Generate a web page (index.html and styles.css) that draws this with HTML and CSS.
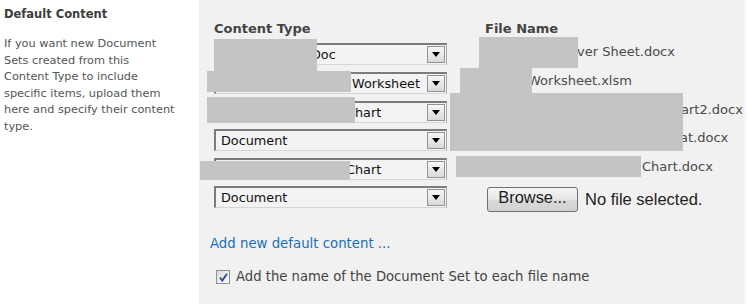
FILE: index.html
```html
<!DOCTYPE html>
<html>
<head>
<meta charset="utf-8">
<link rel="stylesheet" href="styles.css">
</head>
<body>
<div class="page">
  <div class="side">
    <h3 class="side-title">Default Content</h3>
    <p class="side-desc">If you want new Document<br>Sets created from this<br>Content Type to include<br>specific items, upload them<br>here and specify their content<br>type.</p>
  </div>
  <div class="main">
    <div class="table">
      <div class="th">Content Type</div>
      <div class="th">File Name</div>

      <div class="sel"><span class="sel-text ind-doc">Doc</span><span class="sel-btn"></span></div>
      <div class="fn fn-1">ver Sheet.docx</div>

      <div class="sel"><span class="sel-text ind-ws">Worksheet</span><span class="sel-btn"></span></div>
      <div class="fn fn-2">Worksheet.xlsm</div>

      <div class="sel"><span class="sel-text ind-chart">Chart</span><span class="sel-btn"></span></div>
      <div class="fn fn-3">art2.docx</div>

      <div class="sel"><span class="sel-text">Document</span><span class="sel-btn"></span></div>
      <div class="fn fn-4">at.docx</div>

      <div class="sel"><span class="sel-text ind-chart">Chart</span><span class="sel-btn"></span></div>
      <div class="fn fn-5">Chart.docx</div>

      <div class="sel"><span class="sel-text">Document</span><span class="sel-btn"></span></div>
      <div class="upload"><span class="browse">Browse...</span><span class="nofile">No file selected.</span></div>
    </div>
    <a class="add-link">Add new default content ...</a>
    <div class="chk-row">
      <span class="chk"><svg width="11" height="11" viewBox="0 0 11 11"><path d="M2 5.5 L4.3 8.5 L9 1.8" fill="none" stroke="#2f4f9a" stroke-width="2"/></svg></span>
      <span class="chk-label">Add the name of the Document Set to each file name</span>
    </div>

    <span class="redact r1"></span>
    <span class="redact r2"></span>
    <span class="redact r3"></span>
    <span class="redact r4"></span>
    <span class="redact ra"></span>
    <span class="redact rb"></span>
    <span class="redact rc"></span>
    <span class="redact rd"></span>
  </div>
  <div class="edge"></div>
</div>
</body>
</html>
```

FILE: styles.css
```css
html, body {
  margin: 0;
  padding: 0;
  background: #ffffff;
}
body {
  font-family: "DejaVu Sans", Verdana, sans-serif;
}
.page {
  display: flex;
  width: 750px;
  height: 304px;
  background: #ffffff;
}
.side {
  width: 199px;
  flex: none;
  box-sizing: border-box;
  padding: 6px 0 0 4px;
}
.side-title {
  margin: 0;
  font-size: 11.5px;
  line-height: 16px;
  font-weight: bold;
  color: #3c3c3c;
}
.side-desc {
  margin: 14px 0 0;
  font-size: 11.3px;
  line-height: 16.6px;
  color: #555555;
}
.main {
  width: 545px;
  flex: none;
  position: relative;
  box-sizing: border-box;
  background: #f1f1f1;
  padding: 22.2px 0 0 11px;
}
.edge {
  width: 3px;
  flex: none;
  background: #f8f8f8;
}
.table {
  display: grid;
  grid-template-columns: 233px 1fr;
  column-gap: 38px;
  row-gap: 6.6px;
  margin-left: 4px;
}
.th {
  font-size: 13px;
  line-height: 14.6px;
  font-weight: bold;
  color: #444444;
}
.sel {
  box-sizing: border-box;
  height: 22px;
  display: flex;
  background: #f3f3f3;
  border-top: 2px solid #7b7b7b;
  border-left: 2px solid #7b7b7b;
  border-right: 1px solid #a8a8a8;
  border-bottom: 1px solid #d6d6d6;
}
.sel-text {
  flex: 1;
  overflow: hidden;
  white-space: nowrap;
  padding: 1px 0 0 5px;
  font-size: 12.8px;
  line-height: 18px;
  color: #111111;
}
.ind-doc { text-indent: 90px; }
.ind-ws { text-indent: 131px; }
.ind-chart { text-indent: 125px; }
.sel-btn {
  flex: none;
  box-sizing: border-box;
  width: 18px;
  margin: 1px 1px 1px 0;
  border: 1px solid #939393;
  background: linear-gradient(#f7f7f7, #d9d9d9);
  display: flex;
  align-items: center;
  justify-content: center;
}
.sel-btn::after {
  content: "";
  width: 0;
  height: 0;
  border-left: 4px solid transparent;
  border-right: 4px solid transparent;
  border-top: 5px solid #000000;
}
.fn {
  align-self: start;
  font-size: 13px;
  line-height: 18px;
  color: #4a4a4a;
  white-space: nowrap;
}
.fn-1 { padding-left: 92px; }
.fn-2 { padding-left: 43px; }
.fn-3 { padding-left: 196px; }
.fn-4 { padding-left: 195px; }
.fn-5 { padding-left: 157px; }
.upload {
  display: flex;
  align-items: center;
  padding-top: 1px;
}
.browse {
  box-sizing: border-box;
  width: 91px;
  height: 25px;
  margin-left: 2px;
  padding-bottom: 4px;
  border: 1px solid #707070;
  border-radius: 3px;
  background: linear-gradient(#f6f6f6, #e6e6e6 50%, #dadada 51%, #d2d2d2);
  font-family: "Liberation Sans", Arial, sans-serif;
  font-size: 16.4px;
  line-height: 19px;
  color: #1b1b1b;
  text-align: center;
}
.nofile {
  margin-left: 7px;
  font-family: "Liberation Sans", Arial, sans-serif;
  font-size: 16.5px;
  line-height: 19px;
  color: #222222;
}
.add-link {
  display: block;
  margin-top: 22.5px;
  font-size: 13.3px;
  line-height: 18px;
  color: #1a6fb8;
  text-decoration: none;
}
.chk-row {
  display: flex;
  align-items: center;
  margin-top: 15px;
  margin-left: 6px;
}
.chk {
  box-sizing: border-box;
  width: 14px;
  height: 14px;
  border: 1px solid #8e8f8f;
  background: linear-gradient(135deg, #dcdcdc, #fbfbfb);
  display: flex;
  align-items: center;
  justify-content: center;
  margin-top: 1px;
}
.chk-label {
  margin-left: 6px;
  font-size: 13.2px;
  line-height: 18px;
  color: #444444;
}
.redact {
  position: absolute;
  background: #c4c4c4;
}
.r1 { left: 15px; top: 39px; width: 103px; height: 32px; }
.r2 { left: 8px; top: 71px; width: 144px; height: 21px; }
.r3 { left: 8px; top: 97px; width: 148px; height: 26px; }
.r4 { left: 1px; top: 161px; width: 150px; height: 19px; }
.ra { left: 280px; top: 37px; width: 99px; height: 31px; }
.rb { left: 261px; top: 68px; width: 72px; height: 25px; }
.rc { left: 251px; top: 93px; width: 233px; height: 58px; }
.rd { left: 257px; top: 156px; width: 185px; height: 21px; }
```
